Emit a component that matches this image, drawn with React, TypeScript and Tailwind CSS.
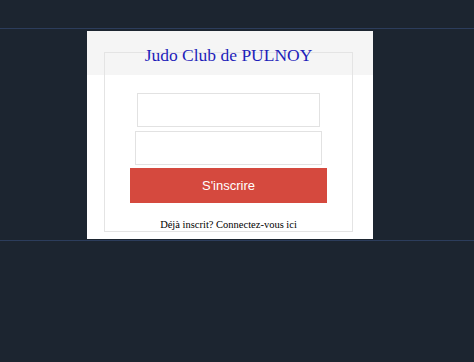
import React from 'react';

const App: React.FC = () => {
  return (
    <div className="min-h-screen w-full bg-[#1c2530] pt-[28px]">
      <div className="border-y border-[#2c3d5c] pt-[2px] pb-[1px]">
        <div className="ml-[87px] w-[286px] bg-[linear-gradient(#f5f5f5_44px,#ffffff_44px)] pt-[21px] pr-[20px] pb-[7px] pl-[17px]">
          <div className="flex h-[180px] flex-col items-center border border-[#e4e4e4]">
            <h1 className="-mt-[8px] shrink-0 text-[17.5px] leading-[20px] text-[#1e1eba] font-['Liberation_Serif',serif]">
              Judo Club de PULNOY
            </h1>
            <input
              type="text"
              className="mt-[28px] h-[34px] w-[183px] shrink-0 border border-[#e2e2e2] bg-white outline-none"
            />
            <input
              type="password"
              className="mt-[4px] h-[34px] w-[187px] shrink-0 border border-[#e2e2e2] bg-white outline-none"
            />
            <button className="mt-[3px] h-[35px] w-[197px] shrink-0 bg-[#d5493e] text-[13px] text-white font-['Liberation_Sans',Arial,sans-serif]">
              S'inscrire
            </button>
            <p className="mt-[15px] shrink-0 text-[10.5px] leading-[14px] text-black font-['Liberation_Serif',serif]">
              Déjà inscrit? Connectez-vous ici
            </p>
          </div>
        </div>
      </div>
    </div>
  );
};

export default App;
